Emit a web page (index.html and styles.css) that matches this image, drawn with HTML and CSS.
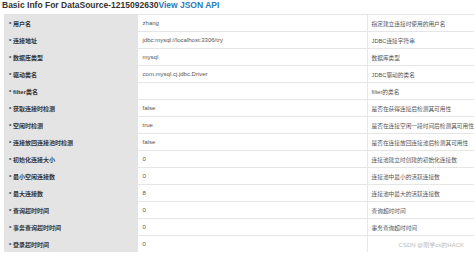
FILE: index.html
```html
<!DOCTYPE html>
<html>
<head>
<meta charset="utf-8">
<link rel="stylesheet" href="styles.css">
</head>
<body>
<h3 class="title">Basic Info For DataSource-1215092630<a class="api" href="#">View JSON API</a></h3>
<table class="info">
<tr><th>* 用户名</th><td>zhang</td><td class="desc">指定建立连接时使用的用户名</td></tr>
<tr><th>* 连接地址</th><td>jdbc:mysql://localhost:3306/try</td><td class="desc">JDBC连接字符串</td></tr>
<tr><th>* 数据库类型</th><td>mysql</td><td class="desc">数据库类型</td></tr>
<tr><th>* 驱动类名</th><td>com.mysql.cj.jdbc.Driver</td><td class="desc">JDBC驱动的类名</td></tr>
<tr><th>* filter类名</th><td></td><td class="desc">filter的类名</td></tr>
<tr><th>* 获取连接时检测</th><td>false</td><td class="desc">是否在获得连接后检测其可用性</td></tr>
<tr><th>* 空闲时检测</th><td>true</td><td class="desc">是否在连接空闲一段时间后检测其可用性</td></tr>
<tr><th>* 连接放回连接池时检测</th><td>false</td><td class="desc">是否在连接放回连接池后检测其可用性</td></tr>
<tr><th>* 初始化连接大小</th><td>0</td><td class="desc">连接池建立时创建的初始化连接数</td></tr>
<tr><th>* 最小空闲连接数</th><td>0</td><td class="desc">连接池中最小的活跃连接数</td></tr>
<tr><th>* 最大连接数</th><td>8</td><td class="desc">连接池中最大的活跃连接数</td></tr>
<tr><th>* 查询超时时间</th><td>0</td><td class="desc">查询超时时间</td></tr>
<tr><th>* 事务查询超时时间</th><td>0</td><td class="desc">事务查询超时时间</td></tr>
<tr><th>* 登录超时时间</th><td>0</td><td class="desc"></td></tr>
</table>
<div class="mark">CSDN @刚学cs的HACK</div>
</body>
</html>
```
FILE: styles.css
```css
html, body {
  margin: 0;
  padding: 0;
  background: #fff;
  overflow: hidden;
}
body {
  font-family: "Liberation Sans", "Noto Sans CJK SC", sans-serif;
  color: #333;
  position: relative;
  width: 474px;
  height: 254px;
}
.title {
  margin: 0;
  padding: 0 0 0 2px;
  height: 14px;
  line-height: 11px;
  font-size: 8.5px;
  font-weight: bold;
  color: #333;
}
.api {
  color: #2a7ab8;
  text-decoration: none;
}
.info {
  margin-left: 4px;
  width: 470px;
  border-collapse: collapse;
  table-layout: fixed;
  font-size: 6px;
}
.info th, .info td {
  height: 16px;
  padding: 0 5px;
  border-top: 1px solid #e6e6e6;
  text-align: left;
  vertical-align: middle;
  white-space: nowrap;
  overflow: hidden;
}
.info th {
  width: 123px;
  background: #e4e4e4;
  font-weight: bold;
  color: #333;
  border-top-color: #e4e4e4;
}
.info td {
  width: 218px;
  color: #555;
}
.info td.desc {
  width: 100px;
  padding: 0 2px 0 4px;
  font-size: 5.7px;
  border-left: 1px solid #e6e6e6;
}
.mark {
  position: absolute;
  right: 10px;
  bottom: 5px;
  font-size: 6px;
  color: #bbb;
}
```
